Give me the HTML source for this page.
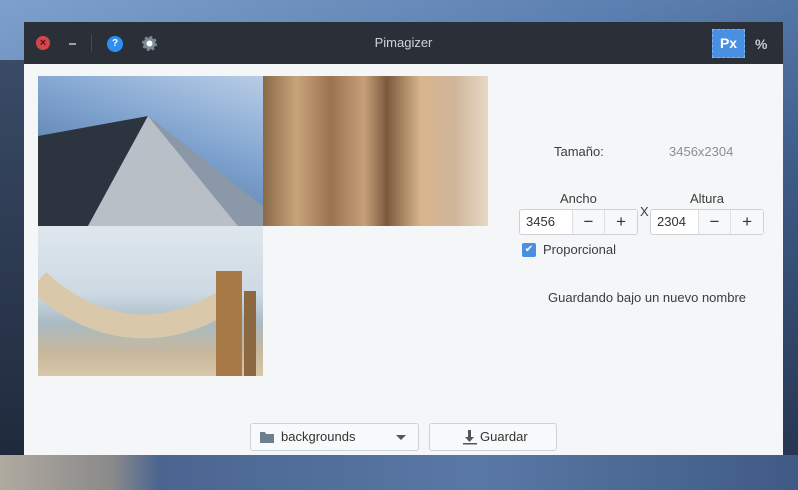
<!DOCTYPE html>
<html><head><style>
*{margin:0;padding:0;box-sizing:border-box}
body{width:798px;height:490px;overflow:hidden;position:relative;font-family:"Liberation Sans","DejaVu Sans",sans-serif;
background:linear-gradient(160deg,#7ea0cc 0%,#5b7fb0 30%,#3d5a86 60%,#24324a 100%);}
.bgl{position:absolute;left:0;top:60px;width:24px;height:430px;background:linear-gradient(180deg,#3a4b66,#1d2738)}
.bgb{position:absolute;left:0;top:455px;width:798px;height:35px;background:linear-gradient(90deg,#b0aaa0 0,#8a8a8a 14%,#4a6590 20%,#5a78a6 60%,#3f5a85 100%)}
.win{position:absolute;left:24px;top:22px;width:759px;height:433px;background:#f5f6f7}
.tb{height:42px;background:#2b2f37;position:relative;color:#d5d8dd}
.title{position:absolute;left:0;right:0;top:13px;text-align:center;font-size:13px;color:#cfd3d9}
.close{position:absolute;left:12px;top:14px;width:14px;height:14px;border-radius:50%;background:#d9434b;color:#3a1f22;font-size:11px;line-height:14px;text-align:center;font-weight:bold}
.min{position:absolute;left:45px;top:21px;width:7px;height:2px;background:#9aa0a8}
.sep{position:absolute;left:67px;top:13px;width:1px;height:17px;background:#454a52}
.help{position:absolute;left:83px;top:14px;width:16px;height:16px;border-radius:50%;background:#2e8ff0;color:#fff;font-size:10px;font-weight:bold;line-height:16px;text-align:center}
.px{position:absolute;left:688px;top:7px;width:33px;height:29px;background:#4a90e2;border:1px dashed #7fb2ee;color:#fff;font-weight:bold;font-size:14px;line-height:27px;text-align:center}
.pc{position:absolute;left:731px;top:14px;color:#c5cbd3;font-weight:bold;font-size:14px}
.img{position:absolute}
.t{position:absolute;font-size:13px;color:#3c3c3c}
.spin{position:absolute;height:26px;border:1px solid #cdd1d6;border-radius:3px;background:#fff;display:flex;font-size:13px;color:#333}
.spin div{border-left:1px solid #dde0e3;width:33px;text-align:center;line-height:24px;font-size:17px;background:#f7f8f9}
.spin span{width:52px;padding-left:6px;line-height:24px}
.btn{position:absolute;height:28px;border:1px solid #cdd3dd;border-radius:3px;background:#f8f9fa;font-size:13px;color:#333;line-height:26px}
</style></head><body>
<div class="bgl"></div><div class="bgb"></div>
<div class="win">
<div class="tb">
<div class="close">×</div><div class="min"></div><div class="sep"></div><div class="help">?</div>
<svg style="position:absolute;left:117px;top:13px" width="17" height="17" viewBox="0 0 17 17"><circle cx="8.5" cy="8.5" r="6" fill="#7a8b96" stroke="#7a8b96" stroke-width="3" stroke-dasharray="2.5 2.2"/><circle cx="8.5" cy="8.5" r="5.5" fill="#7a8b96"/><circle cx="8.5" cy="8.5" r="3" fill="#fff"/></svg>
<div class="title">Pimagizer</div>
<div class="px">Px</div><div class="pc">%</div>
</div>
<div class="img" style="left:14px;top:54px;width:225px;height:150px;background:linear-gradient(200deg,#b8cde6 0%,#7fa3cf 40%,#3f5f8e 100%)">
<svg width="225" height="150"><polygon points="0,60 110,40 50,150 0,150" fill="#2c3440"/><polygon points="50,150 110,40 200,150" fill="#b9bfc6"/><polygon points="110,40 225,130 225,150 200,150" fill="#8b98a8"/></svg></div>
<div class="img" style="left:239px;top:54px;width:225px;height:150px;background:linear-gradient(90deg,#8a6a48 0%,#c9a47a 15%,#9a7450 30%,#c6a07a 45%,#7b5a3c 55%,#d8b58c 70%,#cfb59a 85%,#e6d8c6 100%)"></div>
<div class="img" style="left:14px;top:204px;width:225px;height:150px;background:linear-gradient(180deg,#dfe7ee 0%,#cdd9e3 45%,#a9bac2 65%,#c9b89c 85%,#d8c7a8 100%)">
<svg width="225" height="150"><path d="M0,55 C60,110 130,115 195,70" stroke="#d9c9aa" stroke-width="24" fill="none"/><rect x="178" y="45" width="26" height="105" fill="#a77a48"/><rect x="206" y="65" width="12" height="85" fill="#8c6840"/></svg></div>
<div class="t" style="left:530px;top:122px">Tamaño:</div>
<div class="t" style="left:645px;top:122px;color:#8a8f96">3456x2304</div>
<div class="t" style="left:536px;top:169px">Ancho</div>
<div class="t" style="left:666px;top:169px">Altura</div>
<div class="t" style="left:616px;top:182px">X</div>
<div class="spin" style="left:495px;top:187px;width:119px"><span>3456</span><div>−</div><div>+</div></div>
<div class="spin" style="left:626px;top:187px;width:114px"><span style="width:47px">2304</span><div>−</div><div>+</div></div>
<div style="position:absolute;left:498px;top:221px;width:14px;height:14px;border-radius:2px;background:#4a90e2;color:#fff;font-size:10px;line-height:14px;text-align:center">✔</div>
<div class="t" style="left:519px;top:220px">Proporcional</div>
<div class="t" style="left:524px;top:268px">Guardando bajo un nuevo nombre</div>
<div class="btn" style="left:226px;top:401px;width:169px">
<svg style="position:absolute;left:9px;top:7px" width="14" height="12"><path d="M0,1h5l1,2h8v9h-14z" fill="#6d7f8c"/></svg>
<span style="position:absolute;left:30px">backgrounds</span>
<svg style="position:absolute;left:145px;top:11px" width="10" height="6"><path d="M0,0h10l-5,5z" fill="#555"/></svg></div>
<div class="btn" style="left:405px;top:401px;width:128px">
<svg style="position:absolute;left:33px;top:6px" width="14" height="15"><path d="M5,0h3v7h3l-4.5,5l-4.5,-5h3z" fill="#555"/><rect x="0" y="13" width="14" height="1.5" fill="#555"/></svg>
<span style="position:absolute;left:50px">Guardar</span></div>
</div>
</body></html>
